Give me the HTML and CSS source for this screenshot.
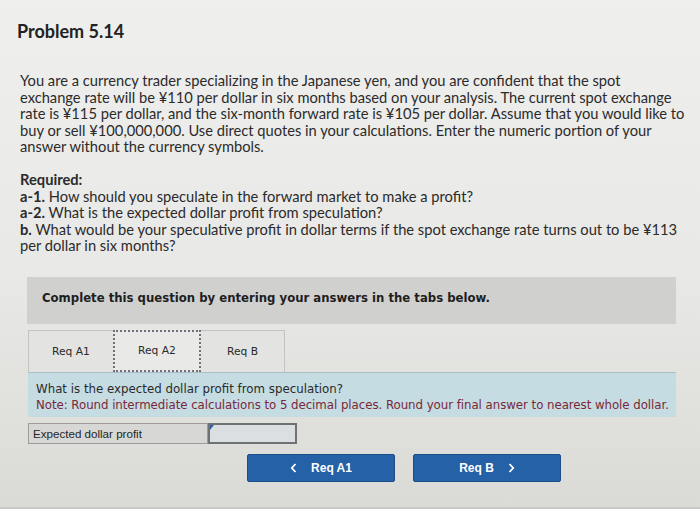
FILE: index.html
```html
<!DOCTYPE html>
<html lang="en">
<head>
<meta charset="utf-8">
<title>Problem 5.14</title>
<link rel="stylesheet" href="styles.css">
</head>
<body>
<div class="page">
  <h1 class="title">Problem 5.14</h1>
  <p class="intro">You are a currency trader specializing in the Japanese yen, and you are confident that the spot<br>exchange rate will be ¥110 per dollar in six months based on your analysis. The current spot exchange<br>rate is ¥115 per dollar, and the six-month forward rate is ¥105 per dollar. Assume that you would like to<br>buy or sell ¥100,000,000. Use direct quotes in your calculations. Enter the numeric portion of your<br>answer without the currency symbols.</p>
  <p class="required"><b>Required:</b><br><b>a-1.</b> How should you speculate in the forward market to make a profit?<br><b>a-2.</b> What is the expected dollar profit from speculation?<br><b>b.</b> What would be your speculative profit in dollar terms if the spot exchange rate turns out to be ¥113<br>per dollar in six months?</p>

  <div class="instructions">Complete this question by entering your answers in the tabs below.</div>

  <div class="tabs">
    <div class="tab tab-a1">Req A1</div>
    <div class="tab tab-a2 active">Req A2</div>
    <div class="tab tab-b">Req B</div>
  </div>

  <div class="question">
    <div class="q-text">What is the expected dollar profit from speculation?</div>
    <div class="q-note">Note: Round intermediate calculations to 5 decimal places. Round your final answer to nearest whole dollar.</div>
  </div>

  <div class="answer-row">
    <div class="answer-label">Expected dollar profit</div>
    <div class="answer-input"><span class="caret"></span></div>
  </div>

  <div class="nav">
    <div class="btn"><svg class="chev" width="7" height="10" viewBox="0 0 7 10"><path d="M5.5 1 L1.8 5 L5.5 9" fill="none" stroke="#fff" stroke-width="1.8"/></svg><span>Req A1</span></div>
    <div class="btn"><span>Req B</span><svg class="chev" width="7" height="10" viewBox="0 0 7 10"><path d="M1.5 1 L5.2 5 L1.5 9" fill="none" stroke="#fff" stroke-width="1.8"/></svg></div>
  </div>
</div>
</body>
</html>
```
FILE: styles.css
```css
html, body {
  margin: 0;
  padding: 0;
}
body {
  width: 700px;
  height: 509px;
  overflow: hidden;
  background: linear-gradient(180deg, #efefed 0%, #e8e8e6 55%, #dadad6 100%);
  border-bottom: 2px solid #c9c9c5;
  box-sizing: border-box;
}
.page {
  padding: 21px 0 0 0;
  font-family: Lato, "Open Sans", sans-serif;
  color: #2b2b2b;
}
.title {
  margin: 0 0 0 17px;
  font-size: 18px;
  line-height: 21px;
  font-weight: 700;
  color: #222;
}
.intro {
  margin: 30px 0 0 20px;
  font-size: 14.7px;
  line-height: 16.5px;
  white-space: nowrap;
}
.required {
  margin: 16.5px 0 0 20px;
  font-size: 14.7px;
  line-height: 16.5px;
  white-space: nowrap;
}
.required b {
  font-weight: 700;
}
.instructions {
  margin: 23px 24px 0 27px;
  height: 47px;
  box-sizing: border-box;
  padding: 13px 15px;
  background: #d0d0ce;
  font-family: "DejaVu Sans", Verdana, sans-serif;
  font-weight: 700;
  font-size: 11.7px;
  line-height: 16px;
  color: #1e1e1e;
}
.tabs {
  display: flex;
  margin: 6px 0 0 28px;
  height: 42px;
}
.tab {
  box-sizing: border-box;
  height: 42px;
  display: flex;
  align-items: center;
  justify-content: center;
  background: #e3e3e1;
  border: 1px solid #c3c3c0;
  border-bottom: none;
  font-family: "DejaVu Sans", Verdana, sans-serif;
  font-size: 10.7px;
  color: #2a2a2a;
}
.tab-a1 { width: 85px; border-right: none; }
.tab-a2 { width: 88px; }
.tab-b { width: 84px; border-left: none; }
.tab.active {
  background: #e9e9e7;
  border: 2px dotted #70707c;
}
.question {
  margin: 0 24px 0 28px;
  box-sizing: border-box;
  height: 45px;
  padding: 8px 0 0 8px;
  background: #c5dce3;
  border-top: 1px solid #a9bfc7;
  font-family: "DejaVu Sans", Verdana, sans-serif;
  font-size: 11.8px;
  line-height: 16px;
  white-space: nowrap;
}
.q-text {
  color: #2a2a2a;
}
.q-note {
  color: #7a2838;
  letter-spacing: -0.05px;
}
.answer-row {
  display: flex;
  margin: 6px 0 0 28px;
  height: 21px;
}
.answer-label {
  box-sizing: border-box;
  width: 180px;
  height: 21px;
  padding: 0 0 0 4px;
  display: flex;
  align-items: center;
  background: #d7d7d5;
  border: 1px solid #9c9c9a;
  font-family: "Liberation Sans", Arial, sans-serif;
  font-size: 11.6px;
  color: #262626;
}
.answer-input {
  position: relative;
  box-sizing: border-box;
  width: 89px;
  height: 21px;
  background: #dcdfe1;
  border: 2px solid #6f7275;
}
.caret {
  position: absolute;
  left: 0;
  top: 0;
  width: 0;
  height: 0;
  border-top: 5px solid #2d63a6;
  border-right: 4px solid transparent;
}
.nav {
  display: flex;
  gap: 18px;
  margin: 10px 0 0 247px;
}
.btn {
  box-sizing: border-box;
  width: 148px;
  height: 28px;
  display: flex;
  align-items: center;
  justify-content: center;
  gap: 14px;
  background: #2461a7;
  border: 1px solid #1c4e8a;
  border-radius: 2px;
  color: #fff;
  font-family: "Liberation Sans", Arial, sans-serif;
  font-weight: 700;
  font-size: 12px;
}
.chev {
  display: block;
}
```
